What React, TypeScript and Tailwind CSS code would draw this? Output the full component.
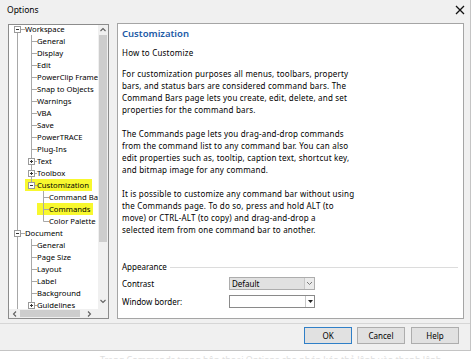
import React from "react";

type Row = {
  label: string;
  level: 0 | 1 | 2;
  exp?: "+" | "-";
  first?: boolean;
  last?: boolean;
  hl?: boolean;
};

const rows: Row[] = [
  { label: "Workspace", level: 0, exp: "-", first: true },
  { label: "General", level: 1 },
  { label: "Display", level: 1 },
  { label: "Edit", level: 1 },
  { label: "PowerClip Frame", level: 1 },
  { label: "Snap to Objects", level: 1 },
  { label: "Warnings", level: 1 },
  { label: "VBA", level: 1 },
  { label: "Save", level: 1 },
  { label: "PowerTRACE", level: 1 },
  { label: "Plug-Ins", level: 1 },
  { label: "Text", level: 1, exp: "+" },
  { label: "Toolbox", level: 1, exp: "+" },
  { label: "Customization", level: 1, exp: "-", last: true, hl: true },
  { label: "Command Bars", level: 2 },
  { label: "Commands", level: 2, hl: true },
  { label: "Color Palette", level: 2, last: true },
  { label: "Document", level: 0, exp: "-" },
  { label: "General", level: 1 },
  { label: "Page Size", level: 1 },
  { label: "Layout", level: 1 },
  { label: "Label", level: 1 },
  { label: "Background", level: 1 },
  { label: "Guidelines", level: 1, exp: "+" },
  { label: "Grid", level: 1 },
];

const LINE = "#a8a8a8";

function ExpBox({ cx, sign }: { cx: number; sign: "+" | "-" }) {
  const x0 = cx - 3;
  return (
    <g>
      <rect x={x0 + 0.5} y={3.5} width={6} height={6} fill="#fff" stroke="#9a9a9a" />
      <line x1={x0 + 2} y1={6.5} x2={x0 + 5} y2={6.5} stroke="#333" />
      {sign === "+" && <line x1={x0 + 3.5} y1={5} x2={x0 + 3.5} y2={8} stroke="#333" />}
    </g>
  );
}

function Cell0({ row }: { row: Row }) {
  return (
    <svg width="16" height="12" className="shrink-0 block">
      {row.level === 0 ? (
        <g>
          {!row.first && <line x1={8.5} y1={0} x2={8.5} y2={3} stroke={LINE} />}
          <line x1={8.5} y1={10} x2={8.5} y2={12} stroke={LINE} />
          <line x1={12} y1={6.5} x2={16} y2={6.5} stroke={LINE} />
          <ExpBox cx={8} sign={row.exp || "-"} />
        </g>
      ) : (
        <line x1={8.5} y1={0} x2={8.5} y2={12} stroke={LINE} />
      )}
    </svg>
  );
}

function Branch({ row, w }: { row: Row; w: number }) {
  return (
    <svg width={w} height="12" className="shrink-0 block">
      <line x1={6.5} y1={0} x2={6.5} y2={row.exp ? 3 : row.last ? 6.5 : 12} stroke={LINE} />
      {row.exp && !row.last && <line x1={6.5} y1={10} x2={6.5} y2={12} stroke={LINE} />}
      <line x1={row.exp ? 10 : 6.5} y1={6.5} x2={w} y2={6.5} stroke={LINE} />
      {row.exp && <ExpBox cx={6} sign={row.exp} />}
    </svg>
  );
}

function TreeRow({ row }: { row: Row }) {
  const text = <span className="pr-[3px] whitespace-nowrap">{row.label}</span>;
  let body: React.ReactNode;
  if (row.level === 0) {
    body = text;
  } else if (row.level === 1) {
    body = (
      <span className={`flex items-center ${row.hl ? "bg-[#f8f82e]" : ""}`}>
        <Branch row={row} w={12} />
        {text}
      </span>
    );
  } else {
    body = (
      <>
        <svg width="12" height="12" className="shrink-0 block" />
        <span className={`flex items-center ${row.hl ? "bg-[#f8f82e]" : ""}`}>
          <Branch row={row} w={12} />
          {text}
        </span>
      </>
    );
  }
  return (
    <div className="flex items-center h-[12px] leading-[12px]">
      <Cell0 row={row} />
      {body}
    </div>
  );
}

function Chevron({ dir }: { dir: "up" | "down" | "left" | "right" }) {
  const paths: Record<string, string> = {
    up: "M1.5 5 L4 2.5 L6.5 5",
    down: "M1.5 3 L4 5.5 L6.5 3",
    left: "M5 1.5 L2.5 4 L5 6.5",
    right: "M3 1.5 L5.5 4 L3 6.5",
  };
  return (
    <svg width="8" height="8" className="block">
      <path d={paths[dir]} fill="none" stroke="#606060" strokeWidth="1.1" />
    </svg>
  );
}

const p1 = [
  "For customization purposes all menus, toolbars, property",
  "bars, and status bars are considered command bars. The",
  "Command Bars page lets you create, edit, delete, and set",
  "properties for the command bars.",
];
const p2 = [
  "The Commands page lets you drag-and-drop commands",
  "from the command list to any command bar. You can also",
  "edit properties such as, tooltip, caption text, shortcut key,",
  "and bitmap image for any command.",
];
const p3 = [
  "It is possible to customize any command bar without using",
  "the Commands page. To do so, press and hold ALT (to",
  "move) or CTRL-ALT (to copy) and drag-and-drop a",
  "selected item from one command bar to another.",
];

function Para({ lines, className }: { lines: string[]; className: string }) {
  return (
    <div className={className}>
      {lines.map((l, i) => (
        <div key={i} className="h-[12px] leading-[12px] whitespace-nowrap">
          {l}
        </div>
      ))}
    </div>
  );
}

export default function App() {
  return (
    <div className="w-[474px] h-[359px] bg-white overflow-hidden font-['Noto_Sans',sans-serif] text-[8px] text-black">
      <div className="w-[471px] h-[351px] bg-[#f0f0f0] border-r border-b border-[#c4c4c4] flex flex-col">
        {/* title bar */}
        <div className="h-[23px] flex items-start justify-between pl-[7px] pr-[5px] pt-[3px]">
          <span className="text-[8.5px] leading-[14px]">Options</span>
          <svg width="10" height="10" className="mt-[2px]">
            <path d="M1 1 L9 9 M9 1 L1 9" stroke="#111" strokeWidth="1.3" />
          </svg>
        </div>

        {/* body */}
        <div className="flex pl-[8px] h-[296px]">
          {/* tree */}
          <div className="w-[101px] h-[295px] mt-[1px] border border-[#8c8c8c] bg-white flex flex-col">
            <div className="flex flex-1 min-h-0">
              <div className="w-[89px] overflow-hidden text-[7.7px]">
                <div className="-mt-[2px]">
                  {rows.map((r, i) => (
                    <TreeRow key={i} row={r} />
                  ))}
                </div>
              </div>
              <div className="w-[10px] bg-[#f0f0f0] flex flex-col items-center">
                <div className="h-[9px] flex items-center justify-center">
                  <Chevron dir="up" />
                </div>
                <div className="w-[8px] h-[207px] mt-[1px] bg-[#cdcdcd]" />
                <div className="flex-1" />
                <div className="h-[10px] mb-[3px] flex items-center justify-center">
                  <Chevron dir="down" />
                </div>
              </div>
            </div>
            <div className="h-[9px] flex bg-[#f0f0f0]">
              <div className="w-[89px] flex items-center">
                <div className="w-[11px] flex justify-center">
                  <Chevron dir="left" />
                </div>
                <div className="w-[60px] h-[7px] bg-[#cdcdcd]" />
                <div className="flex-1 flex justify-center">
                  <Chevron dir="right" />
                </div>
              </div>
              <div className="w-[10px]" />
            </div>
          </div>

          {/* content */}
          <div className="ml-[8px] w-[347px] h-[296px] border border-[#a5a5a5] bg-white flex flex-col pl-[4px] pr-[5px]">
            <div className="pt-[3px] h-[17px] leading-[14px] text-[9.5px] font-semibold text-[#1c5aa6]">
              Customization
            </div>
            <div className="tracking-[0.2px]">
              <div className="mt-[6px] h-[12px] leading-[12px]">How to Customize</div>
              <Para lines={p1} className="mt-[9px]" />
              <Para lines={p2} className="mt-[12px]" />
              <Para lines={p3} className="mt-[12px]" />
            </div>

            <div className="mt-auto pb-[10px]">
              <div className="h-[12px] flex items-center">
                <span className="leading-[12px] pr-[3px]">Appearance</span>
                <div className="flex-1 border-t border-[#dcdcdc]" />
              </div>
              <div className="mt-[4px] h-[13px] flex items-center">
                <span className="w-[107px] leading-[12px]">Contrast</span>
                <div className="w-[86px] h-[13px] border border-[#adadad] bg-[#e1e1e1] flex">
                  <span className="flex-1 pl-[2px] leading-[11px]">Default</span>
                  <div className="w-[10px] bg-[#ebebeb] border-l border-[#c8c8c8] flex items-center justify-center">
                    <svg width="7" height="5">
                      <path d="M1 1 L3.5 3.5 L6 1" fill="none" stroke="#7a7a7a" strokeWidth="1" />
                    </svg>
                  </div>
                </div>
              </div>
              <div className="mt-[5px] h-[13px] flex items-center">
                <span className="w-[107px] leading-[12px]">Window border:</span>
                <div className="w-[86px] h-[13px] border border-[#8a8a8a] bg-white flex">
                  <span className="flex-1" />
                  <div className="w-[9px] border-l border-[#c8c8c8] flex items-center justify-center">
                    <svg width="5" height="3">
                      <path d="M0 0 L5 0 L2.5 3 Z" fill="#222" />
                    </svg>
                  </div>
                </div>
              </div>
            </div>
          </div>
        </div>

        {/* separator */}
        <div className="mt-[4px] border-t border-[#d6d6d6]" />

        {/* buttons */}
        <div className="mt-[3px] flex justify-end pr-[11px]">
          <button className="w-[48px] h-[17px] border border-[#2f7fc7] bg-[#e1e1e1] leading-[15px] text-[8px]">
            OK
          </button>
          <button className="ml-[5px] w-[48px] h-[17px] border border-[#adadad] bg-[#e1e1e1] leading-[15px] text-[8px]">
            Cancel
          </button>
          <button className="ml-[6px] w-[48px] h-[17px] border border-[#adadad] bg-[#e1e1e1] leading-[15px] text-[8px]">
            Help
          </button>
        </div>
      </div>
      <div className="h-[8px] overflow-hidden pl-[100px]">
        <div className="text-[9px] leading-[9px] mt-[4px] text-[#dedede] whitespace-nowrap">
          Trang Commands trong hộp thoại Options cho phép kéo thả lệnh vào thanh lệnh
        </div>
      </div>
    </div>
  );
}
